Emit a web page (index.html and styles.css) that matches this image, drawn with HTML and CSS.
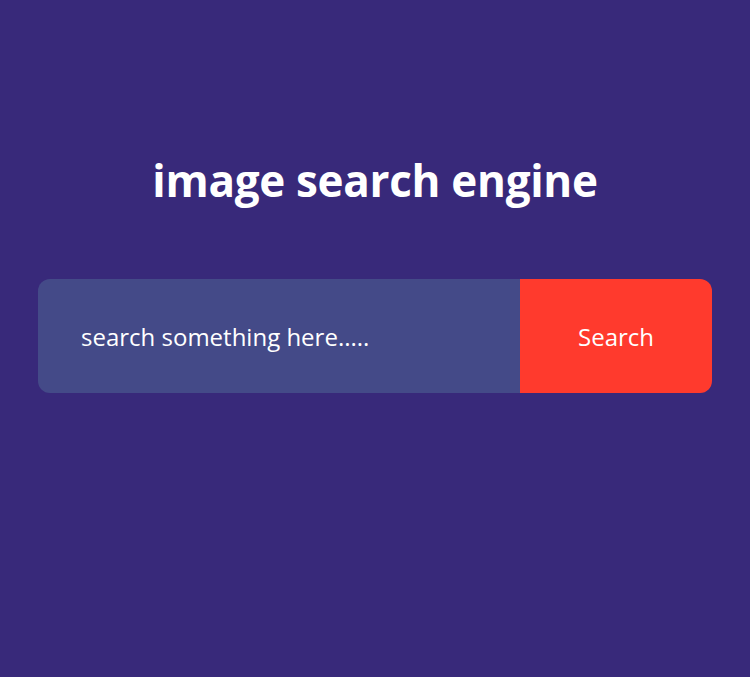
FILE: index.html
```html
<!DOCTYPE html>
<html>
<head>
<meta charset="utf-8">
<link rel="stylesheet" href="styles.css">
</head>
<body>
<main class="page">
  <h1 class="title">image search engine</h1>
  <form class="search">
    <input class="search-input" type="text" placeholder="search something here.....">
    <button class="search-btn" type="button">Search</button>
  </form>
</main>
</body>
</html>
```

FILE: styles.css
```css
html, body {
  margin: 0;
  padding: 0;
  height: 100%;
  background: #38297a;
}
.page {
  display: flex;
  flex-direction: column;
  align-items: center;
  padding-top: 150px;
  font-family: "Open Sans", "Noto Sans", sans-serif;
}
.title {
  margin: 0;
  color: #ffffff;
  font-size: 44px;
  font-weight: 700;
  line-height: 60px;
  letter-spacing: -0.3px;
}
.search {
  display: flex;
  width: 674px;
  height: 114px;
  margin-top: 69px;
  border-radius: 12px;
  overflow: hidden;
}
.search-input {
  flex: 1;
  border: none;
  outline: none;
  background: #444a88;
  color: #ffffff;
  font-family: inherit;
  font-size: 24px;
  padding: 0 0 0 43px;
}
.search-input::placeholder {
  color: #ffffff;
  opacity: 1;
}
.search-btn {
  width: 192px;
  border: none;
  background: #ff3a2d;
  color: #ffffff;
  font-family: inherit;
  font-size: 24px;
  padding: 0;
}
```
